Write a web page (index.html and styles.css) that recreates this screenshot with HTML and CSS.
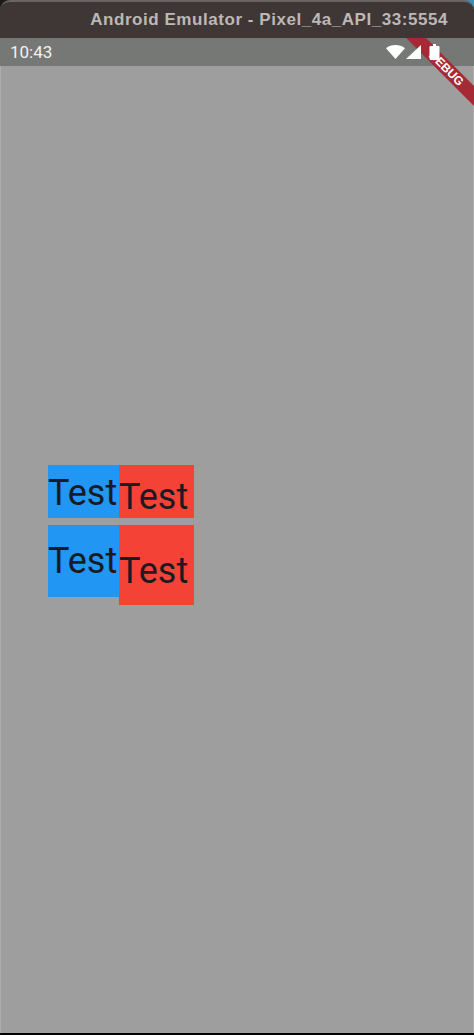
FILE: index.html
```html
<!DOCTYPE html>
<html lang="en">
<head>
    <meta charset="UTF-8">
    <meta name="viewport" content="width=device-width, initial-scale=1.0">
    <title>Android Emulator - Pixel_4a_API_33:5554</title>
    <link rel="stylesheet" href="styles.css">
</head>
<body>
    <div class="window">
        <div class="title-back">
            <div class="title-bar">Android Emulator - Pixel_4a_API_33:5554</div>
        </div>
        <div class="status-bar">
            <span class="clock">10:43</span>
            <div class="status-icons">
                <svg width="19" height="14" viewBox="0 0 19 14"><path d="M0 3.2C2.6 1.1 6 0 9.5 0s6.9 1.1 9.5 3.2L9.5 14z" fill="#fff"/></svg>
                <svg width="15" height="14" viewBox="0 0 15 14"><path d="M15 0v14H0z" fill="#fff"/></svg>
                <svg class="battery" width="11" height="16" viewBox="0 0 11 16"><path d="M4 0h3v2h2.500q1 0 1 1v11.500q0 1.500-1.500 1.500H2q-1.500 0-1.500-1.500V3q0-1 1-1H4z" fill="#fff"/></svg>
            </div>
        </div>
        <div class="screen">
            <div class="rows">
                <div class="row row-first">
                    <div class="cell cell-blue"><span>Test</span></div>
                    <div class="cell cell-red"><span>Test</span></div>
                </div>
                <div class="row row-second">
                    <div class="cell cell-blue"><span>Test</span></div>
                    <div class="cell cell-red"><span>Test</span></div>
                </div>
            </div>
        </div>
        <div class="debug-banner">DEBUG</div>
    </div>
</body>
</html>
```

FILE: styles.css
```css
* {
    box-sizing: border-box;
}
html, body {
    margin: 0;
    height: 100%;
    background-color: #000;
}
.window {
    position: relative;
    width: 474px;
    height: 1035px;
    overflow: hidden;
    display: flex;
    flex-direction: column;
    padding-bottom: 2px;
    font-family: Roboto, sans-serif;
}
.title-back {
    position: relative;
    z-index: 3;
    flex: none;
    background: linear-gradient(90deg, #1c1a18 50%, #3f8fb3 50%);
}
.title-bar {
    height: 38px;
    padding: 10px 26px 0 0;
    text-align: right;
    background-color: #3f3735;
    border-top: 2px solid #6a6361;
    border-radius: 10px 10px 0 0;
    color: #bdb7b5;
    font-family: "Liberation Sans", Arial, sans-serif;
    font-size: 17px;
    font-weight: bold;
    letter-spacing: 0.55px;
    line-height: 16px;
    white-space: nowrap;
}
.status-bar {
    height: 28px;
    flex: none;
    display: flex;
    justify-content: space-between;
    align-items: center;
    padding: 0 34px 0 10px;
    background-color: #767876;
    color: #f2f2f2;
    font-size: 17px;
}
.status-icons {
    position: relative;
    z-index: 2;
    display: flex;
    align-items: center;
    gap: 1px;
}
.battery {
    margin-left: 7px;
}
.screen {
    flex: 1;
    padding: 399px 0 0 48px;
    background-color: #9e9e9e;
    border-left: 1px solid #aeaeae;
    border-right: 1px solid #aeaeae;
}
.rows {
    display: flex;
    flex-direction: column;
    gap: 7px;
    margin-left: -1px;
}
.row {
    display: flex;
}
.row-first {
    height: 53px;
}
.row-second {
    height: 80px;
}
.cell {
    color: #1a1a22;
    font-size: 36px;
    line-height: 1;
}
.cell span {
    display: block;
}
.cell-blue {
    width: 71px;
    background-color: #2196f3;
}
.cell-red {
    width: 75px;
    background-color: #f44336;
}
.row-first .cell-blue span {
    margin-top: 10px;
}
.row-first .cell-red span {
    margin-top: 14px;
}
.row-second .cell-blue {
    height: 72px;
}
.row-second .cell-blue span {
    margin-top: 18px;
}
.row-second .cell-red span {
    margin-top: 28px;
}
.debug-banner {
    position: absolute;
    z-index: 1;
    top: 60px;
    right: -31px;
    width: 120px;
    height: 14px;
    padding-left: 4px;
    background-color: #a52a35;
    color: #fff;
    font-family: "Liberation Sans", Arial, sans-serif;
    font-size: 12px;
    font-weight: bold;
    line-height: 14px;
    text-align: center;
    transform: rotate(45deg);
}
```
